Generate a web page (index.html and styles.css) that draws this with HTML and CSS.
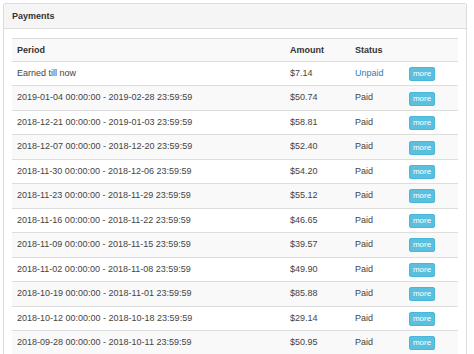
FILE: index.html
```html
<!DOCTYPE html>
<html lang="en">
<head>
    <meta charset="UTF-8">
    <title>Payments</title>
    <link rel="stylesheet" href="styles.css">
</head>
<body>
    <div class="panel">
        <div class="panel-heading">Payments</div>
        <div class="panel-body">
            <table class="payments">
                <tr>
                    <th class="col-period">Period</th>
                    <th class="col-amount">Amount</th>
                    <th class="col-status">Status</th>
                    <th class="col-more"></th>
                </tr>
                <tr>
                    <td>Earned till now</td>
                    <td>$7.14</td>
                    <td><a href="#" class="unpaid">Unpaid</a></td>
                    <td><button class="btn-more">more</button></td>
                </tr>
                <tr>
                    <td>2019-01-04 00:00:00 - 2019-02-28 23:59:59</td>
                    <td>$50.74</td>
                    <td>Paid</td>
                    <td><button class="btn-more">more</button></td>
                </tr>
                <tr>
                    <td>2018-12-21 00:00:00 - 2019-01-03 23:59:59</td>
                    <td>$58.81</td>
                    <td>Paid</td>
                    <td><button class="btn-more">more</button></td>
                </tr>
                <tr>
                    <td>2018-12-07 00:00:00 - 2018-12-20 23:59:59</td>
                    <td>$52.40</td>
                    <td>Paid</td>
                    <td><button class="btn-more">more</button></td>
                </tr>
                <tr>
                    <td>2018-11-30 00:00:00 - 2018-12-06 23:59:59</td>
                    <td>$54.20</td>
                    <td>Paid</td>
                    <td><button class="btn-more">more</button></td>
                </tr>
                <tr>
                    <td>2018-11-23 00:00:00 - 2018-11-29 23:59:59</td>
                    <td>$55.12</td>
                    <td>Paid</td>
                    <td><button class="btn-more">more</button></td>
                </tr>
                <tr>
                    <td>2018-11-16 00:00:00 - 2018-11-22 23:59:59</td>
                    <td>$46.65</td>
                    <td>Paid</td>
                    <td><button class="btn-more">more</button></td>
                </tr>
                <tr>
                    <td>2018-11-09 00:00:00 - 2018-11-15 23:59:59</td>
                    <td>$39.57</td>
                    <td>Paid</td>
                    <td><button class="btn-more">more</button></td>
                </tr>
                <tr>
                    <td>2018-11-02 00:00:00 - 2018-11-08 23:59:59</td>
                    <td>$49.90</td>
                    <td>Paid</td>
                    <td><button class="btn-more">more</button></td>
                </tr>
                <tr>
                    <td>2018-10-19 00:00:00 - 2018-11-01 23:59:59</td>
                    <td>$85.88</td>
                    <td>Paid</td>
                    <td><button class="btn-more">more</button></td>
                </tr>
                <tr>
                    <td>2018-10-12 00:00:00 - 2018-10-18 23:59:59</td>
                    <td>$29.14</td>
                    <td>Paid</td>
                    <td><button class="btn-more">more</button></td>
                </tr>
                <tr>
                    <td>2018-09-28 00:00:00 - 2018-10-11 23:59:59</td>
                    <td>$50.95</td>
                    <td>Paid</td>
                    <td><button class="btn-more">more</button></td>
                </tr>
            </table>
        </div>
    </div>
</body>
</html>
```

FILE: styles.css
```css
body {
    margin: 3px 7px 0 3px;
    background-color: #fff;
    font-family: "Liberation Sans", Arial, sans-serif;
    font-size: 9px;
    color: #444;
}
.panel {
    border: 1px solid #ddd;
    border-radius: 2px;
    background-color: #fff;
}
.panel-heading {
    background-color: #f5f5f5;
    border-bottom: 1px solid #ddd;
    padding: 6px 8px;
    line-height: 12px;
    font-weight: bold;
    color: #333;
}
.panel-body {
    padding: 9px 8px;
}
.payments {
    width: 100%;
    border-collapse: collapse;
}
.payments th,
.payments td {
    text-align: left;
    padding: 5px;
    line-height: 13.45px;
    border-top: 1px solid #ddd;
    vertical-align: middle;
}
.payments th {
    line-height: 12px;
    font-weight: bold;
    color: #333;
}
.payments tr:nth-child(odd) {
    background-color: #f9f9f9;
}
.col-period {
    width: 263px;
}
.col-amount {
    width: 55px;
}
.col-status {
    width: 44px;
}
.unpaid {
    color: #337ab7;
    text-decoration: none;
}
.btn-more {
    display: block;
    width: 26px;
    height: 14px;
    padding: 0;
    margin: 0 0 -1px;
    border: 1px solid #46b8da;
    border-radius: 2px;
    background-color: #5bc0de;
    color: #fff;
    font-family: "Liberation Sans", Arial, sans-serif;
    font-size: 8px;
    line-height: 12px;
    text-align: center;
    cursor: pointer;
}
```
